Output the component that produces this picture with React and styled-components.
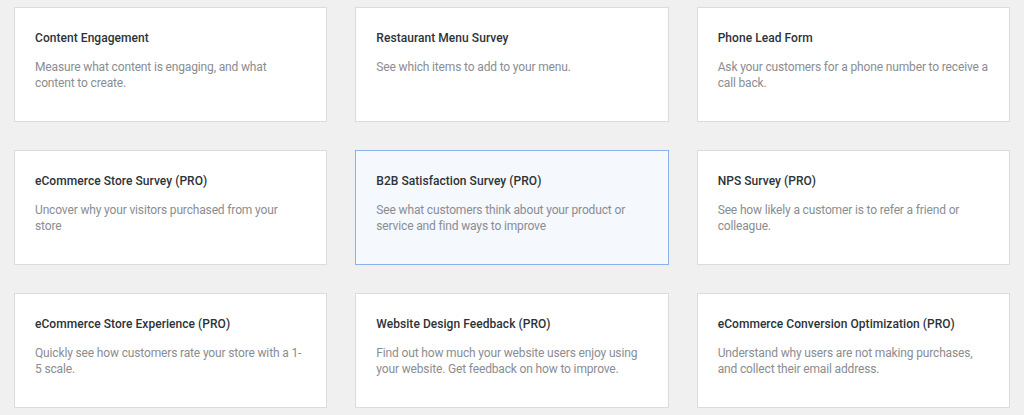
import React from "react";
import styled, { createGlobalStyle } from "styled-components";

const Global = createGlobalStyle`
  html, body { margin: 0; padding: 0; background: #f0f0f1; }
  body { font-family: Roboto, "Liberation Sans", Arial, sans-serif; -webkit-font-smoothing: antialiased; }
`;

const Grid = styled.div`
  display: grid;
  grid-template-columns: repeat(3, 1fr);
  grid-auto-rows: 115px;
  column-gap: 28px;
  row-gap: 28px;
  padding: 7px 14px;
`;

const Card = styled.div`
  box-sizing: border-box;
  background: ${(p) => (p.$active ? "#f5f8fd" : "#ffffff")};
  border: 1px solid ${(p) => (p.$active ? "#8cb2ee" : "#dcdcde")};
  padding: 21px 20px;
  display: flex;
  flex-direction: column;
  gap: 12px;
`;

const Title = styled.div`
  font-size: 12px;
  line-height: 18px;
  font-weight: 500;
  color: #2c3338;
  letter-spacing: 0.05px;
`;

const Desc = styled.div`
  font-size: 12px;
  line-height: 16px;
  color: #8a8d91;
  letter-spacing: -0.15px;
`;

const items = [
  ["Content Engagement", "Measure what content is engaging, and what content to create."],
  ["Restaurant Menu Survey", "See which items to add to your menu."],
  ["Phone Lead Form", "Ask your customers for a phone number to receive a call back."],
  ["eCommerce Store Survey (PRO)", "Uncover why your visitors purchased from your store"],
  ["B2B Satisfaction Survey (PRO)", "See what customers think about your product or service and find ways to improve", true],
  ["NPS Survey (PRO)", "See how likely a customer is to refer a friend or colleague."],
  ["eCommerce Store Experience (PRO)", <>Quickly see how customers rate your store with a 1-<wbr />5 scale.</>],
  ["Website Design Feedback (PRO)", "Find out how much your website users enjoy using your website. Get feedback on how to improve."],
  ["eCommerce Conversion Optimization (PRO)", "Understand why users are not making purchases, and collect their email address."],
];

export default function App() {
  return (
    <>
      <Global />
      <Grid>
        {items.map(([t, d, a]) => (
          <Card key={t} $active={a}>
            <Title>{t}</Title>
            <Desc>{d}</Desc>
          </Card>
        ))}
      </Grid>
    </>
  );
}
